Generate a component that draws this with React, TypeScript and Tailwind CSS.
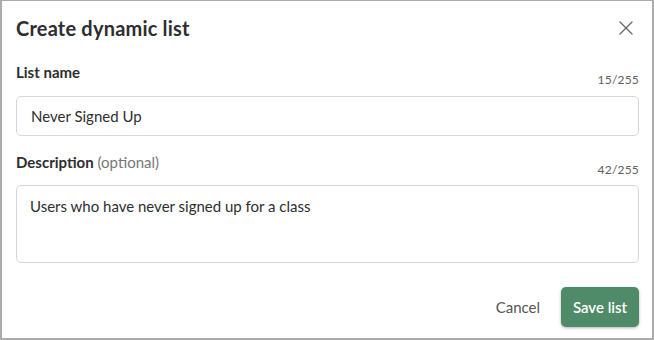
import { X } from 'lucide-react';

export default function App() {
  return (
    <div
      className="w-[654px] h-[340px] bg-white border-t border-l-2 border-r-2 border-b-2 border-[#ababab] flex flex-col text-[#2e2e2e]"
      style={{ fontFamily: 'Lato, "Noto Sans", sans-serif' }}
    >
      <div className="flex items-center justify-between pl-[14px] pr-[14px] pt-[14px]">
        <h1 className="text-[20px] font-bold leading-[26px] tracking-[0.2px]">Create dynamic list</h1>
        <button type="button" className="text-[#666]">
          <X className="w-[24px] h-[24px]" strokeWidth={1.3} />
        </button>
      </div>

      <div className="pl-[14px] pr-[13px] mt-[21px]">
        <div className="flex items-end justify-between">
          <label className="text-[15px] font-bold leading-[20px] mb-[6px]">List name</label>
          <span className="text-[12px] text-[#5e5e5e] leading-[16px] tracking-[0.2px]">15/255</span>
        </div>
        <input
          readOnly
          value="Never Signed Up"
          className="mt-[8px] w-full h-[40px] border border-[#d6d6d6] rounded-[5px] px-[14px] text-[15px] text-[#2e2e2e] outline-none"
        />
      </div>

      <div className="pl-[14px] pr-[13px] mt-[16px]">
        <div className="flex items-end justify-between">
          <label className="text-[15px] leading-[20px] mb-[6px]">
            <span className="font-bold">Description</span>{' '}
            <span className="text-[#777]">(optional)</span>
          </label>
          <span className="text-[12px] text-[#5e5e5e] leading-[16px] tracking-[0.2px]">42/255</span>
        </div>
        <textarea
          readOnly
          value="Users who have never signed up for a class"
          className="mt-[7px] w-full h-[78px] border border-[#d6d6d6] rounded-[5px] px-[13px] py-[9px] text-[15px] text-[#2e2e2e] outline-none resize-none block"
        />
      </div>

      <div className="flex items-center justify-end gap-[21px] pr-[13px] mt-[24px]">
        <button type="button" className="text-[15px] text-[#555]">Cancel</button>
        <button
          type="button"
          className="w-[78px] h-[40px] rounded-[5px] bg-[#4f8b69] text-white text-[15px] font-semibold shadow-[0_1px_3px_rgba(0,0,0,0.3)]"
        >
          Save list
        </button>
      </div>
    </div>
  );
}
